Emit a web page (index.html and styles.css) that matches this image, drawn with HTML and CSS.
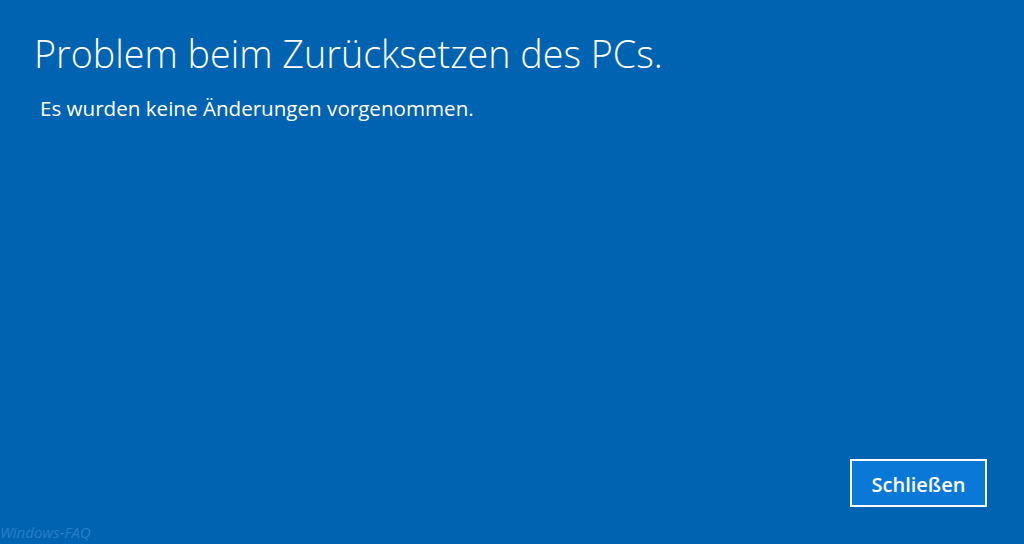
FILE: index.html
```html
<!DOCTYPE html>
<html lang="de">
<head>
    <meta charset="UTF-8">
    <meta name="viewport" content="width=device-width, initial-scale=1.0">
    <title>Problem beim Zurücksetzen des PCs.</title>
    <link rel="stylesheet" href="styles.css">
</head>
<body>
    <div class="screen">
        <div class="content">
            <h1 class="title">Problem beim Zurücksetzen des PCs.</h1>
            <p class="message">Es wurden keine Änderungen vorgenommen.</p>
        </div>
        <div class="actions">
            <button class="btn">Schließen</button>
        </div>
        <div class="watermark">Windows-FAQ</div>
    </div>
</body>
</html>
```

FILE: styles.css
```css
/* Vollbild-Dialog */
html, body {
    margin: 0;
    height: 100%;
}
body {
    background-color: #0063b1;
    color: #ffffff;
    font-family: "Open Sans", "Noto Sans", sans-serif;
    overflow: hidden;
}
.screen {
    height: 544px;
    display: flex;
    flex-direction: column;
    position: relative;
}
.content {
    flex: 1;
    padding: 30px 0 0 34px;
}
.title {
    margin: 0;
    font-size: 37.7px;
    font-weight: 300;
    line-height: 48px;
}
.message {
    margin: 16px 0 0 6px;
    font-size: 20.6px;
    font-weight: 400;
    line-height: 28px;
}
.actions {
    display: flex;
    justify-content: flex-end;
    padding: 0 37px 37px 0;
}
.btn {
    width: 137px;
    height: 48px;
    background-color: #0a78d7;
    border: 2px solid #ffffff;
    color: #ffffff;
    font-family: "Open Sans", "Noto Sans", sans-serif;
    font-size: 20px;
    font-weight: 600;
    padding: 3px 0 0 0;
}
.watermark {
    position: absolute;
    left: 0;
    bottom: 2px;
    font-size: 15px;
    color: #2a7fc4;
    font-style: italic;
}
```
